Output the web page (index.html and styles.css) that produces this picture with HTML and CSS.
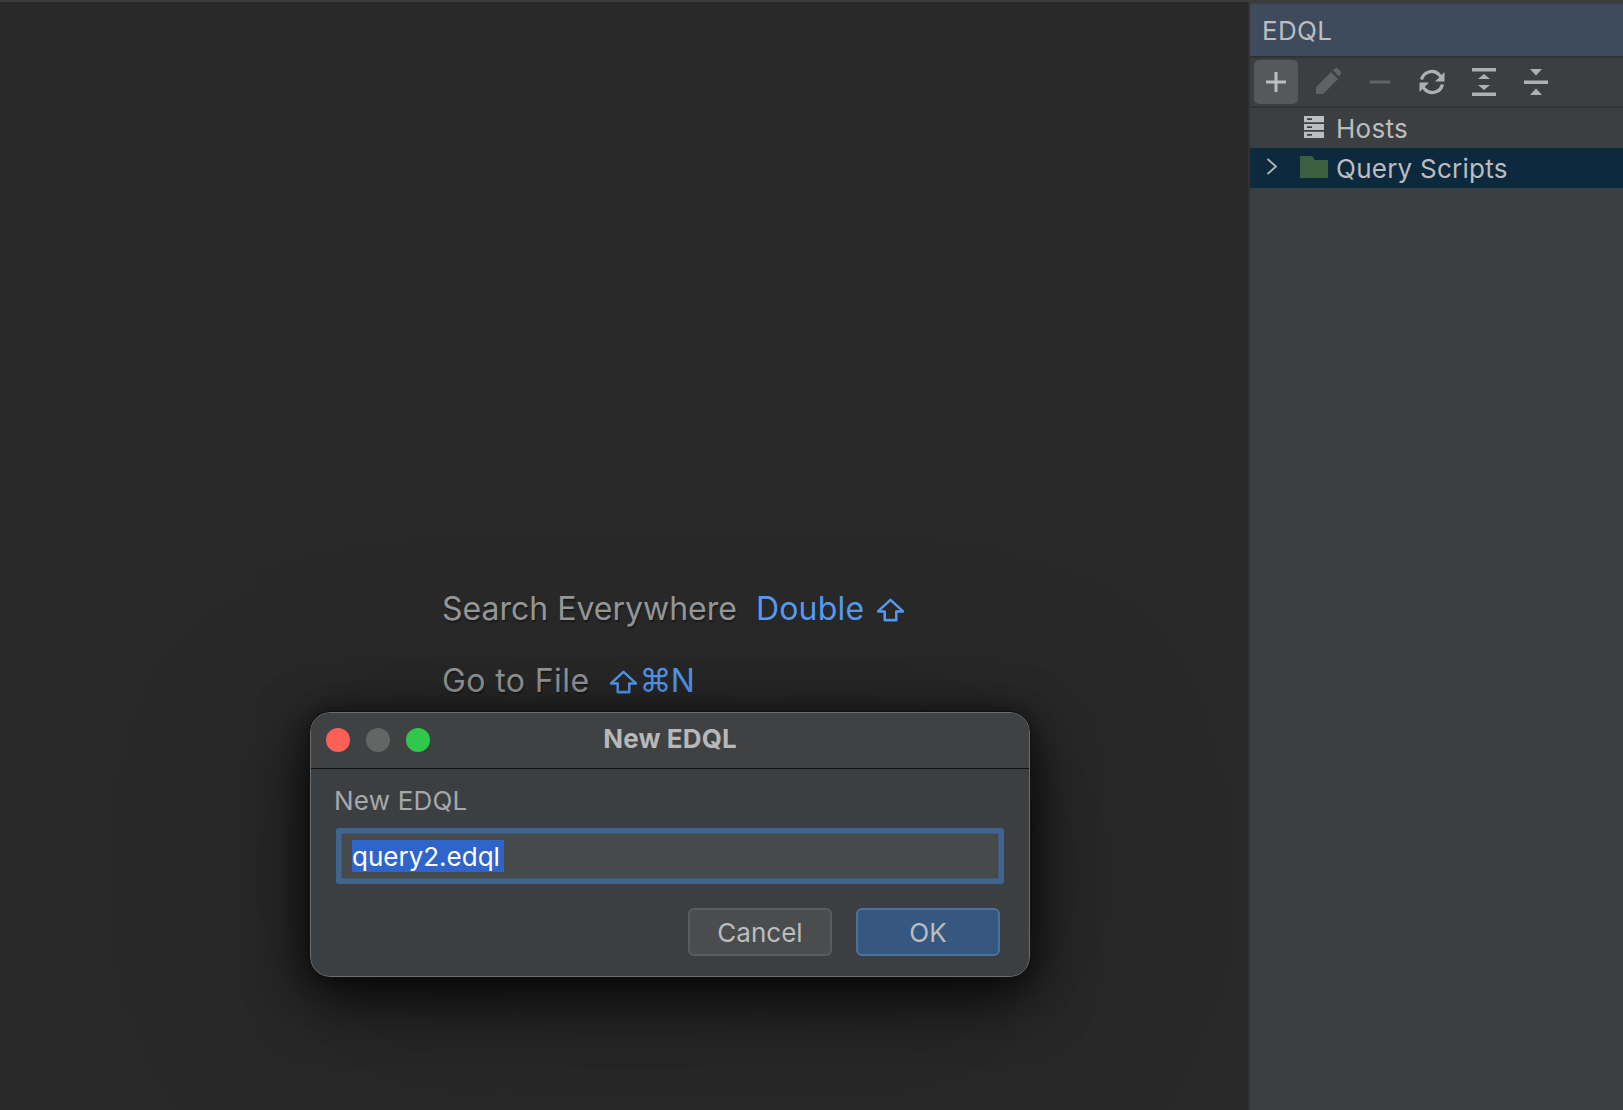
FILE: index.html
```html
<!DOCTYPE html>
<html lang="en">
<head>
<meta charset="utf-8">
<title>New EDQL</title>
<link rel="stylesheet" href="styles.css">
</head>
<body>
<div class="ide">
  <main class="editor">
    <div class="hints">
      <p class="hint"><span>Search Everywhere</span><span class="keys">Double <svg class="shift" viewBox="0 0 28 24" width="27" height="24" aria-label="Shift"><path d="M14 1.500 27 13.500h-7v9H8v-9H1z" fill="none" stroke="#589df6" stroke-width="2.600" stroke-linejoin="round"/></svg></span></p>
      <p class="hint hint-wide"><span>Go to File</span><span class="keys"><svg class="shift" viewBox="0 0 28 24" width="27" height="24" aria-label="Shift"><path d="M14 1.500 27 13.500h-7v9H8v-9H1z" fill="none" stroke="#589df6" stroke-width="2.600" stroke-linejoin="round"/></svg><span class="glyph">⌘</span>N</span></p>
    </div>
  </main>
  <aside class="panel">
    <header class="panel-title">EDQL</header>
    <div class="toolbar">
      <button class="tool tool-active" aria-label="Add">
        <svg viewBox="0 0 24 24" width="24" height="24"><path d="M10.500 2h3v8.500H22v3h-8.500V22h-3v-8.500H2v-3h8.500z" fill="#bcbfc1"/></svg>
      </button>
      <button class="tool" aria-label="Edit">
        <svg viewBox="0 0 30 30" width="30" height="30"><path d="M3 20 18 5l7 7-15 15H3zM20 3.500l2-2a2 2 0 0 1 2.800 0l3 3a2 2 0 0 1 0 2.800l-2 2z" fill="#606364"/></svg>
      </button>
      <button class="tool" aria-label="Remove">
        <svg viewBox="0 0 24 24" width="24" height="24"><path d="M1.500 10.500h21v3h-21z" fill="#606364"/></svg>
      </button>
      <button class="tool" aria-label="Refresh">
        <svg viewBox="0 0 26 26" width="26" height="26" fill="none"><path d="M2.500 10.500A10.500 10.500 0 0 1 20 5.500L23 9M23.500 15.500A10.500 10.500 0 0 1 6 20.500L3 17" stroke="#aeb1b3" stroke-width="3.200"/><path d="M25.500 3v9.500H16zM.5 23v-9.500H10z" fill="#aeb1b3"/></svg>
      </button>
      <button class="tool" aria-label="Expand all">
        <svg viewBox="0 0 24 28" width="24" height="28"><path d="M0 0h24v3.500H0zM0 24.500h24V28H0zM12 6l6 5H6zM12 22l-6-5h12z" fill="#aeb1b3"/></svg>
      </button>
      <button class="tool" aria-label="Collapse all">
        <svg viewBox="0 0 24 26" width="24" height="26"><path d="M0 11.500h24v3.500H0zM6 0h12l-6 6.500zM12 19.500l6 6.500H6z" fill="#aeb1b3"/></svg>
      </button>
    </div>
    <ul class="tree">
      <li class="tree-row">
        <span class="tree-chevron"></span>
        <svg class="tree-icon" viewBox="0 0 20 22" width="20" height="22"><path d="M0 0h20v6.300H0zM0 7.900h20v6.200H0zM0 15.700h20V22H0z" fill="#bcbfc1"/><path d="M3 2.300h5v1.700H3zM3 10.200h5v1.700H3zM3 18h5v1.700H3z" fill="#3c3f41"/></svg>
        <span>Hosts</span>
      </li>
      <li class="tree-row tree-row-selected">
        <span class="tree-chevron"><svg viewBox="0 0 12 17" width="12" height="17" fill="none"><path d="M1.500 1 10 8.500 1.500 16" stroke="#b4b7b9" stroke-width="1.800"/></svg></span>
        <svg class="tree-icon tree-folder" viewBox="0 0 28 22" width="28" height="22"><path d="M0 0h12l3 4h13v18H0z" fill="#3e5f3f"/></svg>
        <span>Query Scripts</span>
      </li>
    </ul>
  </aside>
</div>
<section class="dialog">
  <header class="dialog-title">
    <span class="lights"><i class="light light-red"></i><i class="light light-grey"></i><i class="light light-green"></i></span>
    <h1>New EDQL</h1>
  </header>
  <div class="dialog-body">
    <label class="field-label">New EDQL</label>
    <div class="input"><span class="selected">query2.edql</span></div>
    <div class="buttons">
      <button class="btn">Cancel</button>
      <button class="btn btn-primary">OK</button>
    </div>
  </div>
</section>
</body>
</html>
```
FILE: styles.css
```css
* { box-sizing: border-box; }
html, body { margin: 0; height: 100%; overflow: hidden; }
body { background: #292929; font-family: Inter, "Liberation Sans", sans-serif; position: relative; }
.ide { display: flex; height: 1110px; border-top: 2px solid #3a3c3e; }
.editor { flex: 1; display: flex; flex-direction: column; padding: 0 0 0 442px; }
.hints { padding-top: 588px; display: flex; flex-direction: column; gap: 35px; }
.hint { margin: 0; display: flex; gap: 19px; font-size: 32px; line-height: 37px; color: #98999a; text-shadow: 1px 2px 1px #1c1c1c; white-space: nowrap; }
.hint-wide { letter-spacing: .4px; }
.keys { color: #589df6; text-shadow: none; letter-spacing: .2px; }
.shift { vertical-align: -2px; margin-left: 3px; }
.hint-wide .shift { margin-left: 2px; }
.glyph { font-family: "DejaVu Sans", sans-serif; margin: 0 -1px 0 2px; }
.panel { width: 375px; background: #3c3f41; border-left: 2px solid #323232; display: flex; flex-direction: column; position: relative; z-index: 1; }
.panel-title { height: 54px; margin-top: 2px; background: #3d4b5c; border-bottom: 2px solid #323232; color: #bbbdbf; font-size: 26px; letter-spacing: .3px; display: flex; align-items: center; padding: 1px 0 0 12px; }
.toolbar { height: 50px; display: flex; align-items: center; gap: 8px; padding-left: 4px; border-bottom: 2px solid #323232; }
.tool { width: 44px; height: 44px; border: 0; padding: 0; background: none; border-radius: 5px; display: flex; align-items: center; justify-content: center; }
.tool-active { background: #56595b; }
.tree { list-style: none; margin: 0; padding: 0; }
.tree-row { height: 40px; display: flex; align-items: center; color: #bbbdbf; font-size: 26px; letter-spacing: .25px; position: relative; padding: 1px 0 0 86px; }
.tree-row-selected { background: #0d293e; }
.tree-chevron { position: absolute; left: 16px; top: 10px; }
.tree-chevron svg { display: block; }
.tree-icon { position: absolute; left: 54px; top: 8px; }
.tree-folder { left: 50px; top: 8px; }
.dialog { position: absolute; left: 310px; top: 712px; width: 720px; height: 265px; background: #3c3f41; border: 1px solid #6c6e70; outline: 1px solid #111; border-radius: 20px; box-shadow: 0 20px 60px rgba(0,0,0,.8), 0 0 24px rgba(0,0,0,.45), 0 30px 200px rgba(0,0,0,.3); overflow: hidden; display: flex; flex-direction: column; }
.dialog-title { height: 56px; flex: none; background: #3f4142; border-bottom: 1.500px solid #101010; display: flex; align-items: center; justify-content: center; position: relative; padding-bottom: 4px; }
.dialog-title h1 { margin: 0; font-size: 26px; font-weight: 700; letter-spacing: .1px; color: #b6b8ba; }
.lights { position: absolute; left: 15px; top: 15px; display: flex; gap: 16px; }
.light { width: 24px; height: 24px; border-radius: 50%; }
.light-red { background: #fe5f57; }
.light-grey { background: #646665; }
.light-green { background: #30c84a; }
.dialog-body { flex: 1; padding: 17px 25px 0 23px; display: flex; flex-direction: column; }
.field-label { color: #a6a8aa; font-size: 26px; letter-spacing: .2px; line-height: 30px; }
.input { height: 56px; margin: 12px 0 0 2px; background: #45494a; border: 5px solid #41658e; border-radius: 3px; padding: 7px 0 0 11px; box-shadow: inset 0 0 0 1px #3b5a7e; font-size: 26px; line-height: 32px; color: #fff; }
.selected { display: inline-block; background: #2f65ca; height: 32px; padding: 1px 3px 0 0; width: 152px; }
.buttons { display: flex; justify-content: flex-end; gap: 24px; margin-top: 24px; padding-right: 4px; }
.btn { width: 144px; height: 48px; border-radius: 6px; border: 2px solid #5a5c5e; background: #4a4c4e; color: #bbbdbf; font: 400 26px Inter, "Liberation Sans", sans-serif; padding: 0; }
.btn-primary { background: #365880; border-color: #4c7099; }
```
